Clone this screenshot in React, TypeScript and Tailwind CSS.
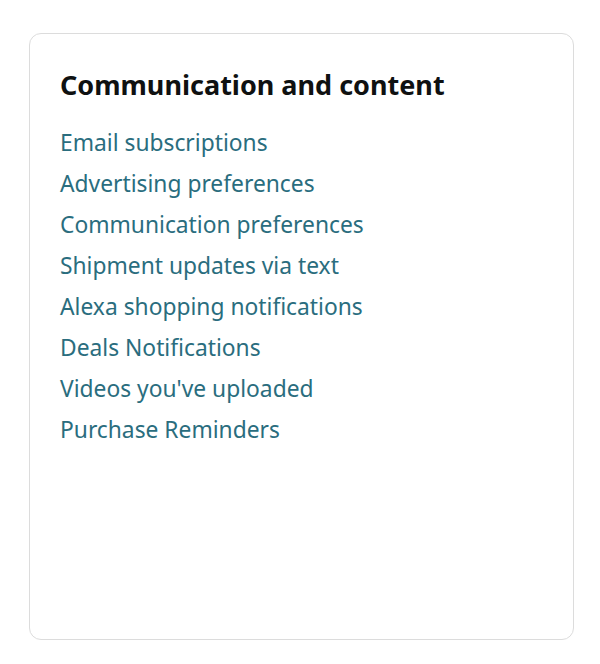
const links = [
  "Email subscriptions",
  "Advertising preferences",
  "Communication preferences",
  "Shipment updates via text",
  "Alexa shopping notifications",
  "Deals Notifications",
  "Videos you've uploaded",
  "Purchase Reminders",
];

export default function App() {
  return (
    <div className="min-h-[664px] w-[600px] bg-white pl-[29px] pt-[33px] font-['Noto_Sans',sans-serif]">
      <div className="flex h-[607px] w-[545px] flex-col rounded-[12px] border border-[#dcdcdc] px-[30px] pt-[35px]">
        <h2 className="text-[27px] font-bold leading-[32px] text-[#0f1111]">
          Communication and content
        </h2>
        <ul className="mt-[21px] flex flex-col">
          {links.map((l) => (
            <li key={l}>
              <a href="#" className="text-[22.8px] leading-[41px] text-[#2a6d7e]">
                {l}
              </a>
            </li>
          ))}
        </ul>
      </div>
    </div>
  );
}
